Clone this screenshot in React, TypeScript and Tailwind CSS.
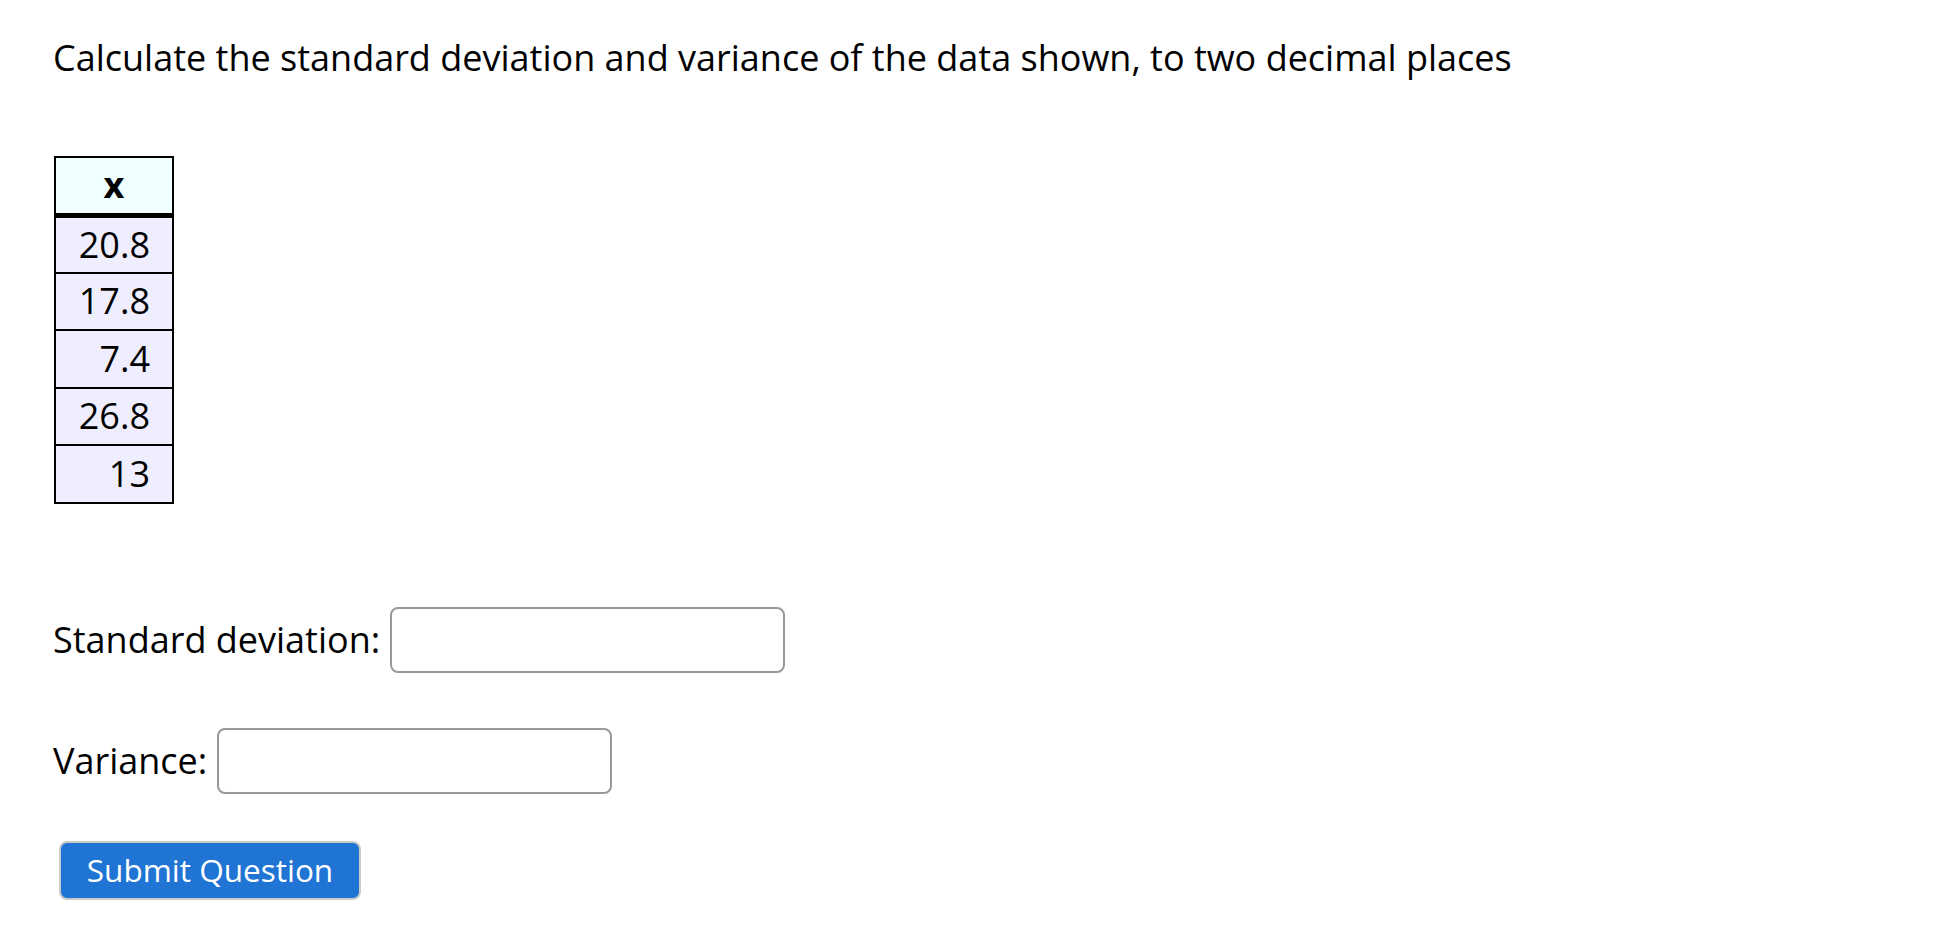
import React from "react";

const values = ["20.8", "17.8", "7.4", "26.8", "13"];

const AnswerRow = ({ label, name }: { label: string; name: string }) => (
  <div className="flex items-center">
    <label htmlFor={name} className="text-[36px] leading-[54px] text-black">
      {label}
    </label>
    <input
      id={name}
      name={name}
      type="text"
      className="ml-[10px] w-[395px] h-[66px] rounded-[8px] border-2 border-[#999999] bg-white px-3 text-[32px] outline-none"
    />
  </div>
);

export default function App() {
  return (
    <div
      className="min-h-screen bg-white pl-[53px] pt-[31px] text-black"
      style={{ fontFamily: '"Open Sans", "Noto Sans", sans-serif' }}
    >
      {/* Question */}
      <p className="text-[36px] leading-[54px]">
        Calculate the standard deviation and variance of the data shown, to two decimal places
      </p>

      {/* Data table */}
      <table className="mt-[71px] ml-[1px] w-[120px] border-collapse border-2 border-black text-[36px]">
        <thead>
          <tr>
            <th className="h-[58px] border-2 border-b-[5px] border-black bg-[#f0ffff] text-center font-bold leading-none">
              x
            </th>
          </tr>
        </thead>
        <tbody>
          {values.map((v) => (
            <tr key={v}>
              <td className="h-[57.5px] border-2 border-black bg-[#eeeeff] pr-[22px] text-right leading-none">
                {v}
              </td>
            </tr>
          ))}
        </tbody>
      </table>

      {/* Answers */}
      <div className="mt-[103px] flex flex-col gap-[55px]">
        <AnswerRow label="Standard deviation:" name="sd" />
        <AnswerRow label="Variance:" name="variance" />
      </div>

      <button
        type="submit"
        className="mt-[47px] ml-[6px] h-[59px] w-[302px] rounded-[8px] border-2 border-[#cccccc] bg-[#1f74d4] text-[31.5px] text-white"
      >
        Submit Question
      </button>
    </div>
  );
}
